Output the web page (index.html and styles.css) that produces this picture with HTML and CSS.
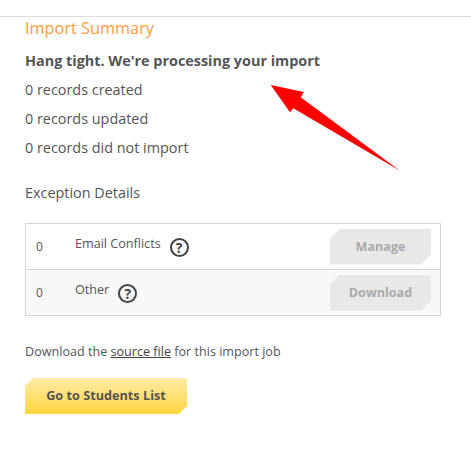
FILE: index.html
```html
<!DOCTYPE html>
<html lang="en">
<head>
  <meta charset="UTF-8">
  <meta name="viewport" content="width=device-width, initial-scale=1.0">
  <title>Import Summary</title>
  <link rel="stylesheet" href="styles.css">
</head>
<body>
  <main class="summary">
    <h1>Import Summary</h1>
    <p class="status">Hang tight. We're processing your import</p>
    <p class="count">0 records created</p>
    <p class="count">0 records updated</p>
    <p class="count">0 records did not import</p>

    <h2>Exception Details</h2>
    <div class="exceptions">
      <div class="row">
        <span class="num">0</span>
        <span class="label">Email Conflicts</span>
        <span class="help">?</span>
        <button class="btn-off">Manage</button>
      </div>
      <div class="row alt">
        <span class="num">0</span>
        <span class="label">Other</span>
        <span class="help">?</span>
        <button class="btn-off">Download</button>
      </div>
    </div>

    <p class="source">Download the <a href="#">source file</a> for this import job</p>
    <button class="btn-main">Go to Students List</button>
  </main>

  <!-- annotation arrow -->
  <svg class="arrow" width="471" height="456" viewBox="0 0 471 456">
    <path d="M270.7 85 L304 92 L300.7 97.3 L400 170.7 L293.3 108.3 L290 112.3 Z" fill="#ff0000"/>
  </svg>
</body>
</html>
```

FILE: styles.css
```css
body {
  font-family: "Open Sans", sans-serif;
  font-size: 14.4px;
  color: #555;
  margin: 0;
  background-color: #fff;
}
.summary {
  border-top: 1px solid #ddd;
  margin-top: 16px;
  padding: 0 30px 0 25px;
}
h1 {
  font-size: 16.3px;
  font-weight: 400;
  color: #ff9a3c;
  line-height: 22px;
  margin: 0;
}
.status {
  font-weight: 700;
  line-height: 20px;
  margin: 12px 0 0;
}
.count {
  line-height: 20px;
  margin: 9px 0 0;
}
h2 {
  font-size: 14.4px;
  font-weight: 400;
  line-height: 20px;
  margin: 25px 0 0;
}
.exceptions {
  border: 1px solid #d5d5d5;
  margin-top: 20px;
}
.row {
  display: flex;
  align-items: center;
  height: 45px;
  padding: 0 9px 0 10px;
}
.row.alt {
  background-color: #f8f8f8;
  border-top: 1px solid #d5d5d5;
}
.num {
  font-size: 12px;
  width: 39px;
}
.label {
  font-size: 12.6px;
  margin: -7px 9px 0 0;
}
.help {
  width: 15px;
  height: 15px;
  border: 2px solid #444;
  border-radius: 50%;
  color: #444;
  font-size: 14px;
  font-weight: 700;
  line-height: 15px;
  text-align: center;
  margin-top: 2px;
}
.btn-off {
  font-family: inherit;
  font-size: 12.6px;
  font-weight: 700;
  color: #aaa;
  background-color: #e8e8e8;
  border: none;
  width: 101px;
  height: 36px;
  margin-left: auto;
  padding: 0;
  clip-path: polygon(10px 0, 100% 0, 100% calc(100% - 10px), calc(100% - 10px) 100%, 0 100%, 0 10px);
}
.source {
  font-size: 12.6px;
  line-height: 18px;
  margin: 27px 0 0;
}
.source a {
  color: #444;
}
.btn-main {
  display: block;
  font-family: inherit;
  font-size: 12.7px;
  font-weight: 700;
  color: #555;
  background: linear-gradient(#ffeba8, #ffd53e);
  border: none;
  width: 162px;
  height: 36px;
  margin-top: 17px;
  padding: 0 0 2px;
  clip-path: polygon(8px 0, 100% 0, 100% calc(100% - 8px), calc(100% - 8px) 100%, 0 100%, 0 8px);
}
.arrow {
  position: absolute;
  top: 0;
  left: 0;
  pointer-events: none;
}
```
